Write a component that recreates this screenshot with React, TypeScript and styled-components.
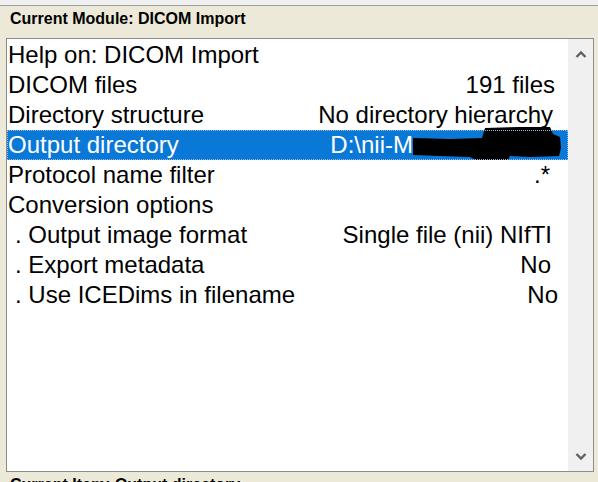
import React from "react";
import styled, { createGlobalStyle } from "styled-components";

const GlobalStyle = createGlobalStyle`
  html, body {
    margin: 0;
    padding: 0;
    overflow: hidden;
    background: #ece9d8;
    font-family: "Liberation Sans", Arial, sans-serif;
  }
`;

type Item = {
  label: string;
  value?: string;
  indent?: boolean;
  selected?: boolean;
  redacted?: boolean;
  shift?: number;
};

const items: Item[] = [
  { label: "Help on: DICOM Import" },
  { label: "DICOM files", value: "191 files" },
  { label: "Directory structure", value: "No directory hierarchy", shift: 2 },
  { label: "Output directory", value: "D:\\nii-M", selected: true, redacted: true },
  { label: "Protocol name filter", value: ".*", shift: 5 },
  { label: "Conversion options" },
  { label: ". Output image format", value: "Single file (nii) NIfTI", indent: true, shift: 3 },
  { label: ". Export metadata", value: "No", indent: true, shift: 4 },
  { label: ". Use ICEDims in filename", value: "No", indent: true, shift: -3 },
];

function App() {
  return (
    <Page>
      <GlobalStyle />
      <TopStrip />
      <ModuleTitle>Current Module: DICOM Import</ModuleTitle>
      <ListBox>
        <ListContent>
          {items.map((item) => (
            <Row key={item.label} $selected={item.selected}>
              <Label $indent={item.indent}>{item.label}</Label>
              {item.value && (
                <Value $shift={item.shift ?? 0}>
                  {item.value}
                  {item.redacted && (
                    <Redaction viewBox="0 0 152 36" width="152" height="36">
                      <path d="M3 12 L40 13 L72 12 L75 2 L110 1 L140 1 L143 8 L150 11 L151 22 L149 30 L120 31 L100 30 L98 34 L66 34 L60 31 L30 30 L3 29 Z" fill="#000" />
                    </Redaction>
                  )}
                </Value>
              )}
            </Row>
          ))}
        </ListContent>
        <ScrollBar>
          <Arrow viewBox="0 0 12 8" width="12" height="8">
            <path d="M1.5 7 L6 2.5 L10.5 7" />
          </Arrow>
          <Arrow viewBox="0 0 12 8" width="12" height="8">
            <path d="M1.5 1 L6 5.5 L10.5 1" />
          </Arrow>
        </ScrollBar>
      </ListBox>
      <CurrentItem>Current Item: Output directory</CurrentItem>
    </Page>
  );
}

const Page = styled.div`
  width: 598px;
  height: 482px;
  overflow: hidden;
  background: #ece9d8;
  display: flex;
  flex-direction: column;
  & > * {
    flex-shrink: 0;
  }
`;

const TopStrip = styled.div`
  height: 5px;
  background: #f0f0f0;
  border-bottom: 1px solid #a0a0a0;
`;

const ModuleTitle = styled.div`
  height: 32px;
  box-sizing: border-box;
  padding: 3px 0 0 10px;
  font-size: 16px;
  font-weight: bold;
  line-height: 20px;
  color: #000;
`;

const ListBox = styled.div`
  margin-left: 6px;
  width: 588px;
  height: 434px;
  box-sizing: border-box;
  border: 1px solid #8c8c8c;
  background: #fff;
  display: flex;
`;

const ListContent = styled.div`
  flex: 1;
  padding-top: 1px;
  display: flex;
  flex-direction: column;
`;

const Row = styled.div<{ $selected?: boolean }>`
  height: 30px;
  display: flex;
  align-items: center;
  justify-content: space-between;
  box-sizing: border-box;
  font-size: 24px;
  line-height: 30px;
  white-space: nowrap;
  color: ${(p) => (p.$selected ? "#fff" : "#000")};
  background: ${(p) => (p.$selected ? "#0a78d7" : "transparent")};
  outline: ${(p) => (p.$selected ? "1px dotted #8fb8e0" : "none")};
  outline-offset: -1px;
`;

const Label = styled.span<{ $indent?: boolean }>`
  padding-left: ${(p) => (p.$indent ? "8px" : "1px")};
`;

const Value = styled.span<{ $shift: number }>`
  padding-right: ${(p) => 13 + p.$shift}px;
  display: flex;
  align-items: center;
`;

const Redaction = styled.svg`
  margin-left: -3px;
  margin-right: -7px;
  margin-top: -2px;
  display: block;
`;

const ScrollBar = styled.div`
  width: 25px;
  background: #f0f0f0;
  display: flex;
  flex-direction: column;
  justify-content: space-between;
  align-items: center;
  padding: 11px 0 10px;
  box-sizing: border-box;
`;

const Arrow = styled.svg`
  display: block;
  fill: none;
  stroke: #606060;
  stroke-width: 2.4;
`;

const CurrentItem = styled.div`
  padding: 3px 0 0 10px;
  font-size: 16px;
  font-weight: bold;
  line-height: 20px;
  color: #000;
`;

export default App;
